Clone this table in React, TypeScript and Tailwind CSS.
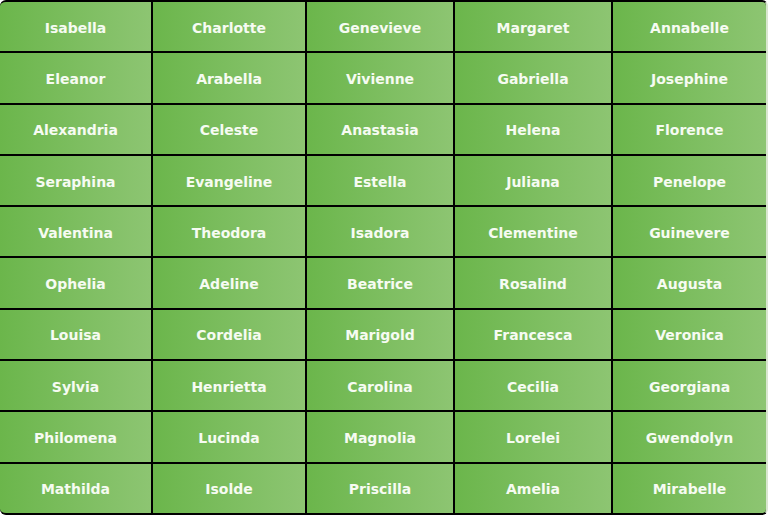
const names = [
  ["Isabella", "Charlotte", "Genevieve", "Margaret", "Annabelle"],
  ["Eleanor", "Arabella", "Vivienne", "Gabriella", "Josephine"],
  ["Alexandria", "Celeste", "Anastasia", "Helena", "Florence"],
  ["Seraphina", "Evangeline", "Estella", "Juliana", "Penelope"],
  ["Valentina", "Theodora", "Isadora", "Clementine", "Guinevere"],
  ["Ophelia", "Adeline", "Beatrice", "Rosalind", "Augusta"],
  ["Louisa", "Cordelia", "Marigold", "Francesca", "Veronica"],
  ["Sylvia", "Henrietta", "Carolina", "Cecilia", "Georgiana"],
  ["Philomena", "Lucinda", "Magnolia", "Lorelei", "Gwendolyn"],
  ["Mathilda", "Isolde", "Priscilla", "Amelia", "Mirabelle"],
];

export default function App() {
  return (
    <div className="w-[768px] h-[515px] bg-white overflow-hidden">
      <div className="h-[515px] rounded-[6px] border-y-2 border-r-2 border-black border-r-[#d9e6d0] overflow-hidden bg-black">
        <div className="grid h-full grid-cols-[151px_152px_146px_156px_1fr] grid-rows-[repeat(10,1fr)] gap-[2px] font-['DejaVu_Sans',sans-serif] text-[14px] font-bold text-[#f6fbf2]">
          {names.flat().map((n) => (
            <div
              key={n}
              className="flex items-center justify-center pt-[3px] bg-linear-to-r from-[#6bb64b] to-[#8dc572]"
            >
              {n}
            </div>
          ))}
        </div>
      </div>
    </div>
  );
}
